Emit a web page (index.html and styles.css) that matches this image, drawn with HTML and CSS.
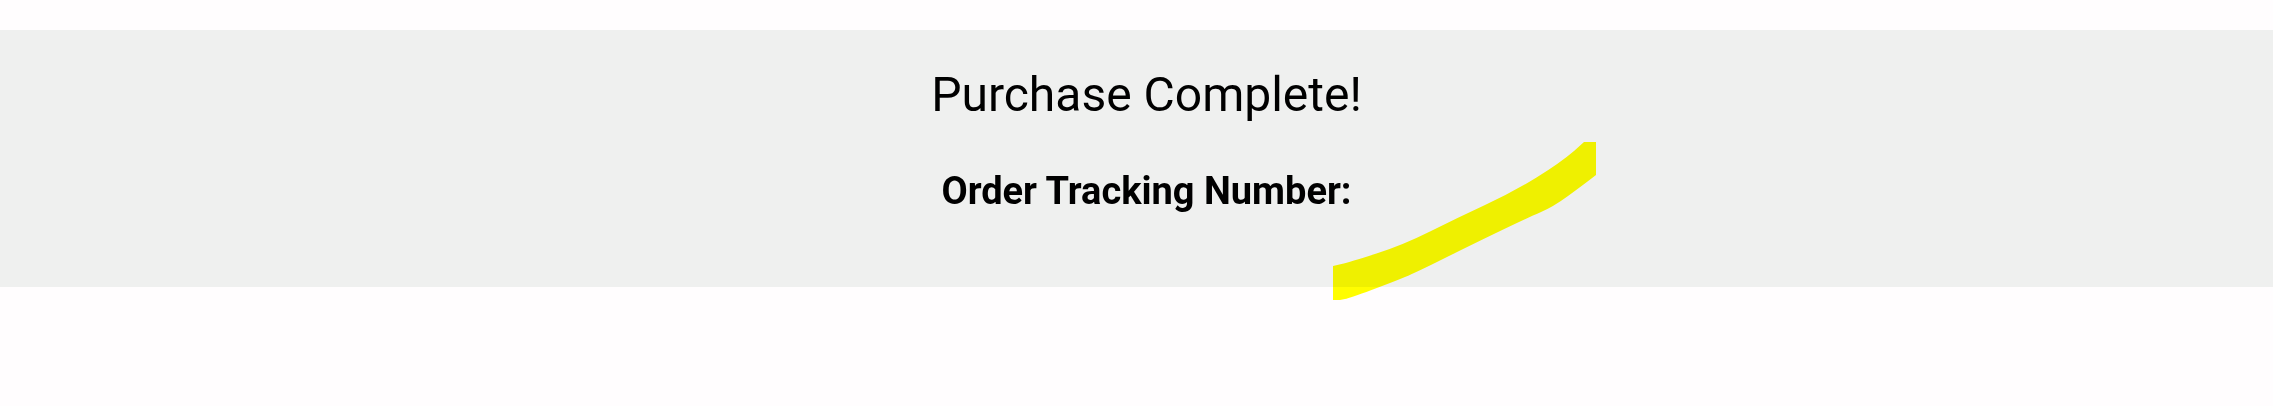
FILE: index.html
```html
<!DOCTYPE html>
<html lang="en">
<head>
<meta charset="utf-8">
<title>Purchase Complete</title>
<link rel="stylesheet" href="styles.css">
</head>
<body>
<main class="page">
  <section class="banner">
    <h1 class="banner-title">Purchase Complete!</h1>
    <p class="banner-order">Order Tracking Number:</p>
  </section>
  <svg class="highlight" width="2273" height="406" viewBox="0 0 2273 406" aria-hidden="true">
    <path d="M1333,266 L1341.5,264 Q1350,262 1376.5,253.5 Q1403,245 1430,231.5 Q1457,218 1485,205 Q1513,192 1536.5,177.5 Q1560,163 1574,151 L1584,142 L1596,142 L1596,175 L1589.5,180 Q1583,185 1568,196 Q1553,207 1540,212.5 Q1527,218 1497,232.5 Q1467,247 1442,259.5 Q1417,272 1405,277 Q1393,282 1371.5,290 Q1350,298 1345,299 L1340,300 L1333,300 Z"/>
  </svg>
</main>
</body>
</html>
```
FILE: styles.css
```css
html, body {
  margin: 0;
  padding: 0;
  background: #fffdfe;
  width: 2273px;
  height: 406px;
  overflow: hidden;
}
.page {
  position: relative;
  padding-top: 30px;
  font-family: Roboto, "Liberation Sans", Arial, sans-serif;
  color: #000;
}
.banner {
  background: #eff0ef;
  height: 257px;
  box-sizing: border-box;
  padding: 37px 0 0 20px;
  display: flex;
  flex-direction: column;
  align-items: center;
}
.banner-title {
  margin: 0;
  font-size: 48px;
  font-weight: 400;
  line-height: 56px;
}
.banner-order {
  margin: 46px 0 0;
  font-size: 38px;
  font-weight: 700;
  line-height: 44px;
}
.highlight {
  position: absolute;
  left: 0;
  top: 0;
  pointer-events: none;
  mix-blend-mode: multiply;
}
.highlight path {
  fill: #ffff00;
}
```
